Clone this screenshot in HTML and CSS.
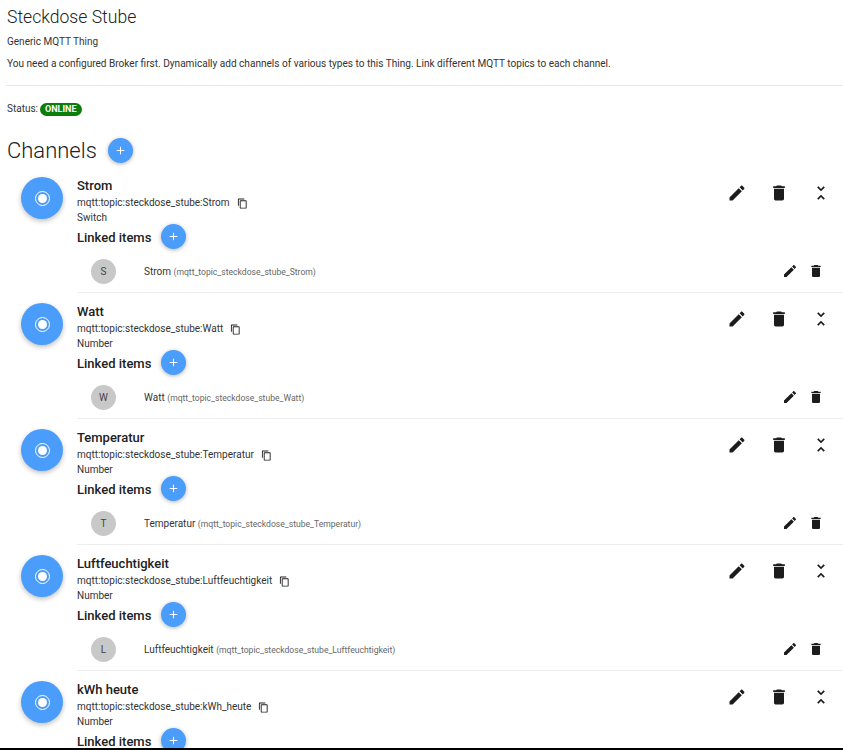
FILE: index.html
```html
<!DOCTYPE html>
<html lang="en">
<head>
    <meta charset="UTF-8">
    <meta name="viewport" content="width=device-width, initial-scale=1.0">
    <title>Steckdose Stube</title>
    <link rel="stylesheet" href="styles.css">
</head>
<body>

<svg class="icon-defs" aria-hidden="true">
    <symbol id="i-edit" viewBox="0 0 24 24"><path d="M3 17.25V21h3.75L17.81 9.94l-3.75-3.75L3 17.25zM20.71 7.04c.39-.39.39-1.02 0-1.41l-2.34-2.34c-.39-.39-1.02-.39-1.41 0l-1.83 1.83 3.75 3.75 1.83-1.83z"/></symbol>
    <symbol id="i-delete" viewBox="0 0 24 24"><path d="M6 19c0 1.1.9 2 2 2h8c1.1 0 2-.9 2-2V7H6v12zM19 4h-3.5l-1-1h-5l-1 1H5v2h14V4z"/></symbol>
    <symbol id="i-fold" viewBox="0 0 24 24"><path d="M7.41 18.59L8.83 20 12 16.83 15.17 20l1.41-1.41L12 14l-4.59 4.59zm9.18-13.18L15.17 4 12 7.17 8.83 4 7.41 5.41 12 10l4.59-4.59z"/></symbol>
    <symbol id="i-copy" viewBox="0 0 24 24"><path d="M16 1H4c-1.1 0-2 .9-2 2v14h2V3h12V1zm3 4H8c-1.1 0-2 .9-2 2v14c0 1.1.9 2 2 2h11c1.1 0 2-.9 2-2V7c0-1.1-.9-2-2-2zm0 16H8V7h11v14z"/></symbol>
    <symbol id="i-plus" viewBox="0 0 24 24"><path d="M19 13h-6v6h-2v-6H5v-2h6V5h2v6h6v2z"/></symbol>
</svg>

<div class="page">

    <!-- Thing header -->
    <header class="thing">
        <h1>Steckdose Stube</h1>
        <p class="thing-type">Generic MQTT Thing</p>
        <p class="thing-desc">You need a configured Broker first. Dynamically add channels of various types to this Thing. Link different MQTT topics to each channel.</p>
    </header>

    <div class="status">Status: <span class="badge">ONLINE</span></div>

    <div class="channels-head">
        <h2>Channels</h2>
        <button class="fab"><svg><use href="#i-plus"/></svg></button>
    </div>

    <!-- Channels -->
    <section class="channel">
        <div class="channel-icon"><span class="ring"></span></div>
        <div class="channel-body">
            <div class="channel-top">
                <div class="channel-info">
                    <h3>Strom</h3>
                    <p class="uid">mqtt:topic:steckdose_stube:Strom <svg class="copy"><use href="#i-copy"/></svg></p>
                    <p class="kind">Switch</p>
                    <div class="linked-head"><h4>Linked items</h4><button class="fab fab-sm"><svg><use href="#i-plus"/></svg></button></div>
                </div>
                <div class="actions">
                    <svg><use href="#i-edit"/></svg>
                    <svg><use href="#i-delete"/></svg>
                    <svg><use href="#i-fold"/></svg>
                </div>
            </div>
            <div class="item">
                <span class="avatar">S</span>
                <span class="item-name">Strom <small>(mqtt_topic_steckdose_stube_Strom)</small></span>
                <span class="item-actions">
                    <svg><use href="#i-edit"/></svg>
                    <svg><use href="#i-delete"/></svg>
                </span>
            </div>
        </div>
    </section>

    <section class="channel">
        <div class="channel-icon"><span class="ring"></span></div>
        <div class="channel-body">
            <div class="channel-top">
                <div class="channel-info">
                    <h3>Watt</h3>
                    <p class="uid">mqtt:topic:steckdose_stube:Watt <svg class="copy"><use href="#i-copy"/></svg></p>
                    <p class="kind">Number</p>
                    <div class="linked-head"><h4>Linked items</h4><button class="fab fab-sm"><svg><use href="#i-plus"/></svg></button></div>
                </div>
                <div class="actions">
                    <svg><use href="#i-edit"/></svg>
                    <svg><use href="#i-delete"/></svg>
                    <svg><use href="#i-fold"/></svg>
                </div>
            </div>
            <div class="item">
                <span class="avatar">W</span>
                <span class="item-name">Watt <small>(mqtt_topic_steckdose_stube_Watt)</small></span>
                <span class="item-actions">
                    <svg><use href="#i-edit"/></svg>
                    <svg><use href="#i-delete"/></svg>
                </span>
            </div>
        </div>
    </section>

    <section class="channel">
        <div class="channel-icon"><span class="ring"></span></div>
        <div class="channel-body">
            <div class="channel-top">
                <div class="channel-info">
                    <h3>Temperatur</h3>
                    <p class="uid">mqtt:topic:steckdose_stube:Temperatur <svg class="copy"><use href="#i-copy"/></svg></p>
                    <p class="kind">Number</p>
                    <div class="linked-head"><h4>Linked items</h4><button class="fab fab-sm"><svg><use href="#i-plus"/></svg></button></div>
                </div>
                <div class="actions">
                    <svg><use href="#i-edit"/></svg>
                    <svg><use href="#i-delete"/></svg>
                    <svg><use href="#i-fold"/></svg>
                </div>
            </div>
            <div class="item">
                <span class="avatar">T</span>
                <span class="item-name">Temperatur <small>(mqtt_topic_steckdose_stube_Temperatur)</small></span>
                <span class="item-actions">
                    <svg><use href="#i-edit"/></svg>
                    <svg><use href="#i-delete"/></svg>
                </span>
            </div>
        </div>
    </section>

    <section class="channel">
        <div class="channel-icon"><span class="ring"></span></div>
        <div class="channel-body">
            <div class="channel-top">
                <div class="channel-info">
                    <h3>Luftfeuchtigkeit</h3>
                    <p class="uid">mqtt:topic:steckdose_stube:Luftfeuchtigkeit <svg class="copy"><use href="#i-copy"/></svg></p>
                    <p class="kind">Number</p>
                    <div class="linked-head"><h4>Linked items</h4><button class="fab fab-sm"><svg><use href="#i-plus"/></svg></button></div>
                </div>
                <div class="actions">
                    <svg><use href="#i-edit"/></svg>
                    <svg><use href="#i-delete"/></svg>
                    <svg><use href="#i-fold"/></svg>
                </div>
            </div>
            <div class="item">
                <span class="avatar">L</span>
                <span class="item-name">Luftfeuchtigkeit <small>(mqtt_topic_steckdose_stube_Luftfeuchtigkeit)</small></span>
                <span class="item-actions">
                    <svg><use href="#i-edit"/></svg>
                    <svg><use href="#i-delete"/></svg>
                </span>
            </div>
        </div>
    </section>

    <section class="channel">
        <div class="channel-icon"><span class="ring"></span></div>
        <div class="channel-body">
            <div class="channel-top">
                <div class="channel-info">
                    <h3>kWh heute</h3>
                    <p class="uid">mqtt:topic:steckdose_stube:kWh_heute <svg class="copy"><use href="#i-copy"/></svg></p>
                    <p class="kind">Number</p>
                    <div class="linked-head"><h4>Linked items</h4><button class="fab fab-sm"><svg><use href="#i-plus"/></svg></button></div>
                </div>
                <div class="actions">
                    <svg><use href="#i-edit"/></svg>
                    <svg><use href="#i-delete"/></svg>
                    <svg><use href="#i-fold"/></svg>
                </div>
            </div>
        </div>
    </section>

</div>

<div class="bottom-bar"></div>

</body>
</html>
```

FILE: styles.css
```css
html, body {
    height: 100%;
}
body {
    font-family: 'Roboto', sans-serif;
    background-color: #fff;
    color: #212121;
    margin: 0;
    padding: 0;
    display: flex;
    flex-direction: column;
    overflow: hidden;
}
.icon-defs {
    display: none;
}
.page {
    flex: 1;
    min-height: 0;
    overflow: hidden;
}
.bottom-bar {
    height: 2px;
    background-color: #000;
}
p, h1, h2, h3, h4 {
    margin: 0;
}
.thing {
    margin-left: 6px;
    padding: 6px 0 14px 1px;
    border-bottom: 1px solid #e6e6e6;
}
.thing h1 {
    font-size: 17.6px;
    font-weight: 300;
    line-height: 22px;
}
.thing-type {
    font-size: 10px;
    line-height: 14px;
    margin-top: 7px;
    color: #333;
}
.thing-desc {
    font-size: 10.07px;
    line-height: 14px;
    margin-top: 8px;
    color: #333;
}
.status {
    margin: 16px 0 0 7px;
    font-size: 10px;
    line-height: 14px;
    color: #333;
    display: flex;
    align-items: center;
    gap: 2px;
}
.badge {
    background-color: #0a7d0a;
    color: #fff;
    font-size: 9px;
    font-weight: 700;
    line-height: 13px;
    padding: 0 5px;
    border-radius: 7px;
}
.channels-head {
    display: flex;
    align-items: center;
    gap: 11px;
    margin: 21px 0 4px 7px;
    height: 26px;
}
.channels-head h2 {
    font-size: 22px;
    font-weight: 300;
}
.fab {
    width: 25px;
    height: 25px;
    padding: 0;
    border: none;
    border-radius: 50%;
    background-color: #4a9dfb;
    box-shadow: 0 1px 4px rgba(0, 0, 0, 0.3);
    display: flex;
    align-items: center;
    justify-content: center;
    flex: none;
}
.fab svg {
    width: 13px;
    height: 13px;
    fill: #fff;
}
.fab-sm {
    margin-top: -2px;
}
.channel {
    display: flex;
    height: 126px;
    padding-left: 21px;
    box-sizing: border-box;
}
.channel-icon {
    width: 42px;
    height: 42px;
    margin-top: 10px;
    border-radius: 50%;
    background-color: #4a9dfb;
    box-shadow: 0 2px 5px rgba(0, 0, 0, 0.25);
    display: flex;
    align-items: center;
    justify-content: center;
    flex: none;
}
/* radio_button_checked: outline and dot */
.ring {
    width: 15px;
    height: 15px;
    box-sizing: border-box;
    padding: 2px;
    border: 1.5px solid #fff;
    border-radius: 50%;
    background-color: #fff;
    background-clip: content-box;
}
.channel-body {
    flex: 1;
    margin-left: 14px;
    border-bottom: 1px solid #eee;
}
.channel-top {
    display: flex;
    justify-content: space-between;
}
.channel-info h3 {
    font-size: 13px;
    font-weight: 500;
    line-height: 16px;
    margin-top: 11px;
}
.uid {
    font-size: 10px;
    line-height: 14px;
    margin-top: 2px;
    color: #333;
    display: flex;
    align-items: center;
    gap: 7px;
}
.copy {
    width: 11px;
    height: 11px;
    fill: #212121;
}
.kind {
    font-size: 10px;
    line-height: 14px;
    margin-top: 1px;
    color: #333;
}
.linked-head {
    display: flex;
    align-items: center;
    gap: 10px;
    margin-top: 1px;
}
.linked-head h4 {
    font-size: 13px;
    font-weight: 500;
}
.actions {
    display: flex;
    gap: 22px;
    padding: 16px 12px 0 0;
}
.actions svg {
    width: 20px;
    height: 20px;
    fill: #1c1c1c;
}
.item {
    display: flex;
    align-items: center;
    height: 25px;
    margin: 10px 0 0 14px;
}
.avatar {
    width: 25px;
    height: 25px;
    border-radius: 50%;
    background-color: #c8c8c8;
    color: #444;
    font-size: 10px;
    display: flex;
    align-items: center;
    justify-content: center;
    flex: none;
}
.item-name {
    flex: 1;
    margin-left: 28px;
    font-size: 10px;
    color: #333;
}
.item-name small {
    font-size: 8.6px;
    color: #666;
}
.item-actions {
    display: flex;
    gap: 10px;
    padding-right: 19px;
    margin-bottom: 2px;
}
.item-actions svg {
    width: 16px;
    height: 16px;
    fill: #1c1c1c;
}
```
